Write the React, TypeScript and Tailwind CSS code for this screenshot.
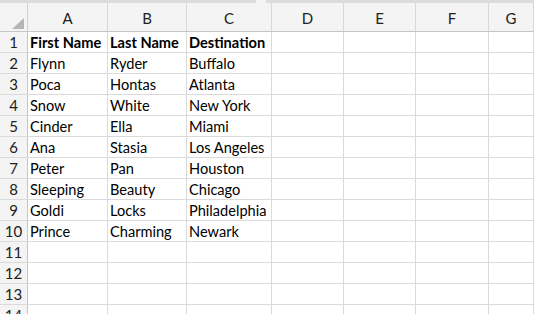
import React from "react";

const cols = ["A", "B", "C", "D", "E", "F", "G"];
const widths = ["w-[80px]", "w-[79px]", "w-[85px]", "w-[72px]", "w-[72px]", "w-[73px]", "flex-1"];
const data: string[][] = [
  ["First Name", "Last Name", "Destination"],
  ["Flynn", "Ryder", "Buffalo"],
  ["Poca", "Hontas", "Atlanta"],
  ["Snow", "White", "New York"],
  ["Cinder", "Ella", "Miami"],
  ["Ana", "Stasia", "Los Angeles"],
  ["Peter", "Pan", "Houston"],
  ["Sleeping", "Beauty", "Chicago"],
  ["Goldi", "Locks", "Philadelphia"],
  ["Prince", "Charming", "Newark"],
  [],
  [],
  [],
  [],
];

export default function App() {
  return (
    <div
      className="w-[534px] h-[314px] overflow-hidden bg-white text-[#000]"
      style={{ fontFamily: "Lato, 'Open Sans', sans-serif" }}
    >
      <div className="h-[3px] flex bg-[#dcdcdc]">
        <div className="w-[256px]" />
        <div className="w-[10px] bg-[#f4f4f4]" />
      </div>
      <div className="flex h-[29px] bg-[#f4f4f4] border-b border-[#c6c6c6]">
        <div className="w-[28px] shrink-0 border-r border-[#d0d0d0] flex items-end justify-end pr-[3px] pb-[2px]">
          <svg width="12" height="11" viewBox="0 0 12 11">
            <polygon points="12,0 12,11 0,11" fill="#b5b5b5" />
          </svg>
        </div>
        {cols.map((c, i) => (
          <div
            key={c}
            className={`${widths[i]} shrink-0 border-r border-[#d8d8d8] flex items-center justify-center text-[15px] text-[#222] pt-[2px]`}
          >
            {c}
          </div>
        ))}
      </div>
      {data.map((row, r) => (
        <div key={r} className="flex h-[21px] border-b border-[#dadada]">
          <div className="w-[28px] shrink-0 bg-[#f4f4f4] border-r border-[#c6c6c6] flex items-center justify-center text-[15px] text-[#222] pt-[1px]">
            {r + 1}
          </div>
          {cols.map((c, i) => (
            <div
              key={c}
              className={`${widths[i]} shrink-0 border-r border-[#dadada] flex items-center pl-[2px] pt-[1px] text-[14.6px] whitespace-nowrap overflow-visible ${
                r === 0 ? "font-bold" : ""
              }`}
            >
              {row[i] ?? ""}
            </div>
          ))}
        </div>
      ))}
    </div>
  );
}
